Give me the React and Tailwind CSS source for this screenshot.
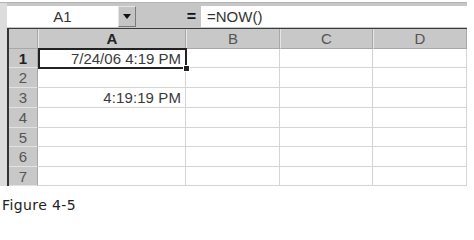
import React from "react";

const cols = [
  { w: "w-[148px]", label: "A", active: true },
  { w: "w-[94px]", label: "B" },
  { w: "w-[93px]", label: "C" },
  { w: "w-[94px]", label: "D" },
];

const rows = [
  { n: 1, h: "h-[19px]", a: "7/24/06 4:19 PM", active: true },
  { n: 2, h: "h-[20px]", a: "" },
  { n: 3, h: "h-[20px]", a: "4:19:19 PM", tight: true },
  { n: 4, h: "h-[20px]", a: "" },
  { n: 5, h: "h-[19px]", a: "" },
  { n: 6, h: "h-[20px]", a: "" },
  { n: 7, h: "h-[19px]", a: "" },
];

export default function App() {
  return (
    <div className="w-[474px] h-[219px] bg-white font-['Liberation_Sans',Arial,sans-serif] text-[#3a3a3a] overflow-hidden">
      <div className="pt-[2px]">
        <div className="w-[467px] flex flex-col">
          {/* toolbar */}
          <div className="h-[26px] border-t border-[#b4b4b4] bg-[#c6c6c6] flex items-start pt-[3px]">
            <div className="w-[7px] self-stretch -mt-[3px] bg-[#dcdcdc]" />
            <div className="w-[111px] h-[21px] bg-white text-center text-[15px] leading-[21px] text-[#333]">
              A1
            </div>
            <div className="w-[18px] h-[21px] bg-[#c4c4c4] border-l border-t border-[#e4e4e4] border-r border-b border-r-[#7a7a7a] border-b-[#7a7a7a] flex items-center justify-center">
              <svg width="8" height="5" viewBox="0 0 8 5">
                <polygon points="0,0 8,0 4,5" fill="#111" />
              </svg>
            </div>
            <div className="w-[65px] h-[21px] flex items-center justify-end pr-[5px]">
              <span className="text-[16px] font-bold leading-none text-[#111]">=</span>
            </div>
            <div className="w-[266px] h-[21px] bg-white text-[15px] leading-[21px] pl-[6px] text-[#333]">
              =NOW()
            </div>
          </div>

          {/* grid */}
          <div className="flex">
            <div className="w-[7px] bg-[#dcdcdc]" />
            <div className="relative w-[460px] border-t border-[#3a3a3a] border-l-2 border-l-[#333]">
              {/* header row */}
              <div className="flex h-[20px]">
                <div className="w-[29px] bg-[#c8c8c8] border-r border-b border-[#a8a8a8]" />
                {cols.map((c) => (
                  <div
                    key={c.label}
                    className={`${c.w} bg-[#c8c8c8] border-r border-b border-[#a8a8a8] border-l border-l-[#e6e6e6] text-center text-[15px] leading-[19px] ${
                      c.active ? "font-bold text-[#222]" : "text-[#555]"
                    }`}
                  >
                    {c.label}
                  </div>
                ))}
              </div>
              {rows.map((r) => (
                <div key={r.n} className={`flex ${r.h}`}>
                  <div
                    className={`w-[29px] bg-[#c8c8c8] border-r border-[#a8a8a8] border-b border-b-[#e2e2e2] text-center text-[15px] leading-[19px] ${
                      r.active ? "font-bold text-[#222]" : "text-[#555]"
                    }`}
                  >
                    {r.n}
                  </div>
                  <div
                    className={`w-[148px] border-r border-b border-[#d4d4d4] text-right pr-[4px] text-[15px] leading-[19px] whitespace-nowrap ${
                      r.tight ? "tracking-[0.1px]" : ""
                    }`}
                  >
                    {r.a}
                  </div>
                  <div className="w-[94px] border-r border-b border-[#d4d4d4]" />
                  <div className="w-[93px] border-r border-b border-[#d4d4d4]" />
                  <div className="w-[94px] border-r border-b border-[#d4d4d4]" />
                </div>
              ))}
              {/* active cell outline */}
              <div className="absolute left-[29px] top-[19px] w-[149px] h-[21px] border-2 border-[#222] pointer-events-none" />
              {/* fill handle */}
              <div className="absolute left-[174px] top-[36px] w-[5px] h-[5px] bg-[#222] border border-white box-content" />
            </div>
          </div>
        </div>
      </div>

      <div className="mt-[11px] pl-[2px] font-['DejaVu_Sans',sans-serif] text-[14px] leading-[16px] tracking-[0.4px] text-[#222]">
        Figure 4-5
      </div>
    </div>
  );
}
